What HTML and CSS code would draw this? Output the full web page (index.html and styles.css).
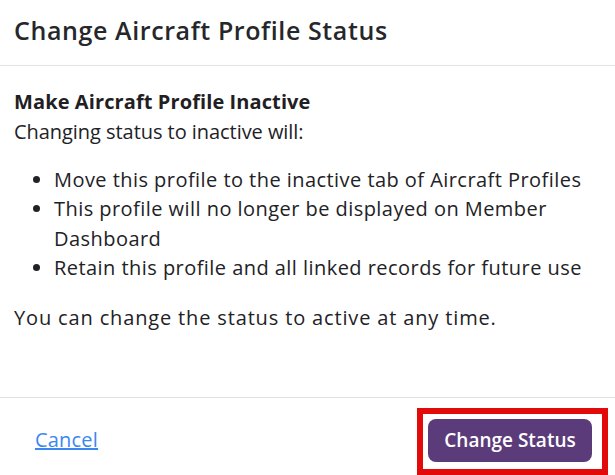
FILE: index.html
```html
<!DOCTYPE html>
<html lang="en">
<head>
<meta charset="utf-8">
<title>Change Aircraft Profile Status</title>
<link rel="stylesheet" href="styles.css">
</head>
<body>
<div class="modal">
  <div class="modal-header">
    <h1 class="modal-title">Change Aircraft Profile Status</h1>
  </div>
  <div class="modal-body">
    <p class="lead"><strong>Make Aircraft Profile Inactive</strong><br><span class="intro">Changing status to inactive will:</span></p>
    <ul class="effects">
      <li>Move this profile to the inactive tab of Aircraft Profiles</li>
      <li>This profile will no longer be displayed on Member Dashboard</li>
      <li>Retain this profile and all linked records for future use</li>
    </ul>
    <p class="note">You can change the status to active at any time.</p>
  </div>
  <div class="modal-footer">
    <a class="cancel" href="#">Cancel</a>
    <div class="highlight">
      <button class="primary" type="button">Change Status</button>
    </div>
  </div>
</div>
</body>
</html>
```
FILE: styles.css
```css
html, body {
  margin: 0;
  padding: 0;
  background: #ffffff;
}
body {
  font-family: "Open Sans", "DejaVu Sans", sans-serif;
  color: #222226;
}
.modal {
  width: 615px;
  height: 475px;
  display: flex;
  flex-direction: column;
  overflow: hidden;
}
.modal-header {
  height: 66px;
  box-sizing: border-box;
  border-bottom: 1px solid #e3e3ea;
  padding: 13px 14px 0;
}
.modal-title {
  margin: 0;
  font-size: 25px;
  line-height: 34px;
  font-weight: 600;
  color: #26272b;
  letter-spacing: 0.6px;
}
.modal-body {
  flex: 1;
  padding: 21px 14px 0;
  font-size: 20px;
  line-height: 29.5px;
  letter-spacing: 0.45px;
}
.modal-body p {
  margin: 0;
}
.lead strong {
  font-weight: 700;
  color: #1f2023;
  letter-spacing: 0.1px;
}
.intro {
  letter-spacing: -0.05px;
}
.effects {
  margin: 18.5px 0 20px;
  padding-left: 40px;
}
.note {
  letter-spacing: 0.85px;
}
.modal-footer {
  height: 78px;
  box-sizing: border-box;
  border-top: 1px solid #e2e2e2;
  display: flex;
  align-items: center;
  justify-content: space-between;
  padding: 9px 7px 0 35px;
}
.cancel {
  font-size: 20px;
  letter-spacing: 0.2px;
  color: #3b87f0;
  text-decoration: underline;
  margin-top: -3px;
}
.highlight {
  border: 6px solid #e30a0a;
  padding: 5px 10px 7px 5px;
}
.primary {
  display: block;
  width: 164px;
  height: 43px;
  border: 0;
  border-radius: 8px;
  background: #5c3b7a;
  color: #ffffff;
  font-family: "Open Sans", "DejaVu Sans", sans-serif;
  font-size: 19px;
  font-weight: 600;
  cursor: pointer;
}
```
